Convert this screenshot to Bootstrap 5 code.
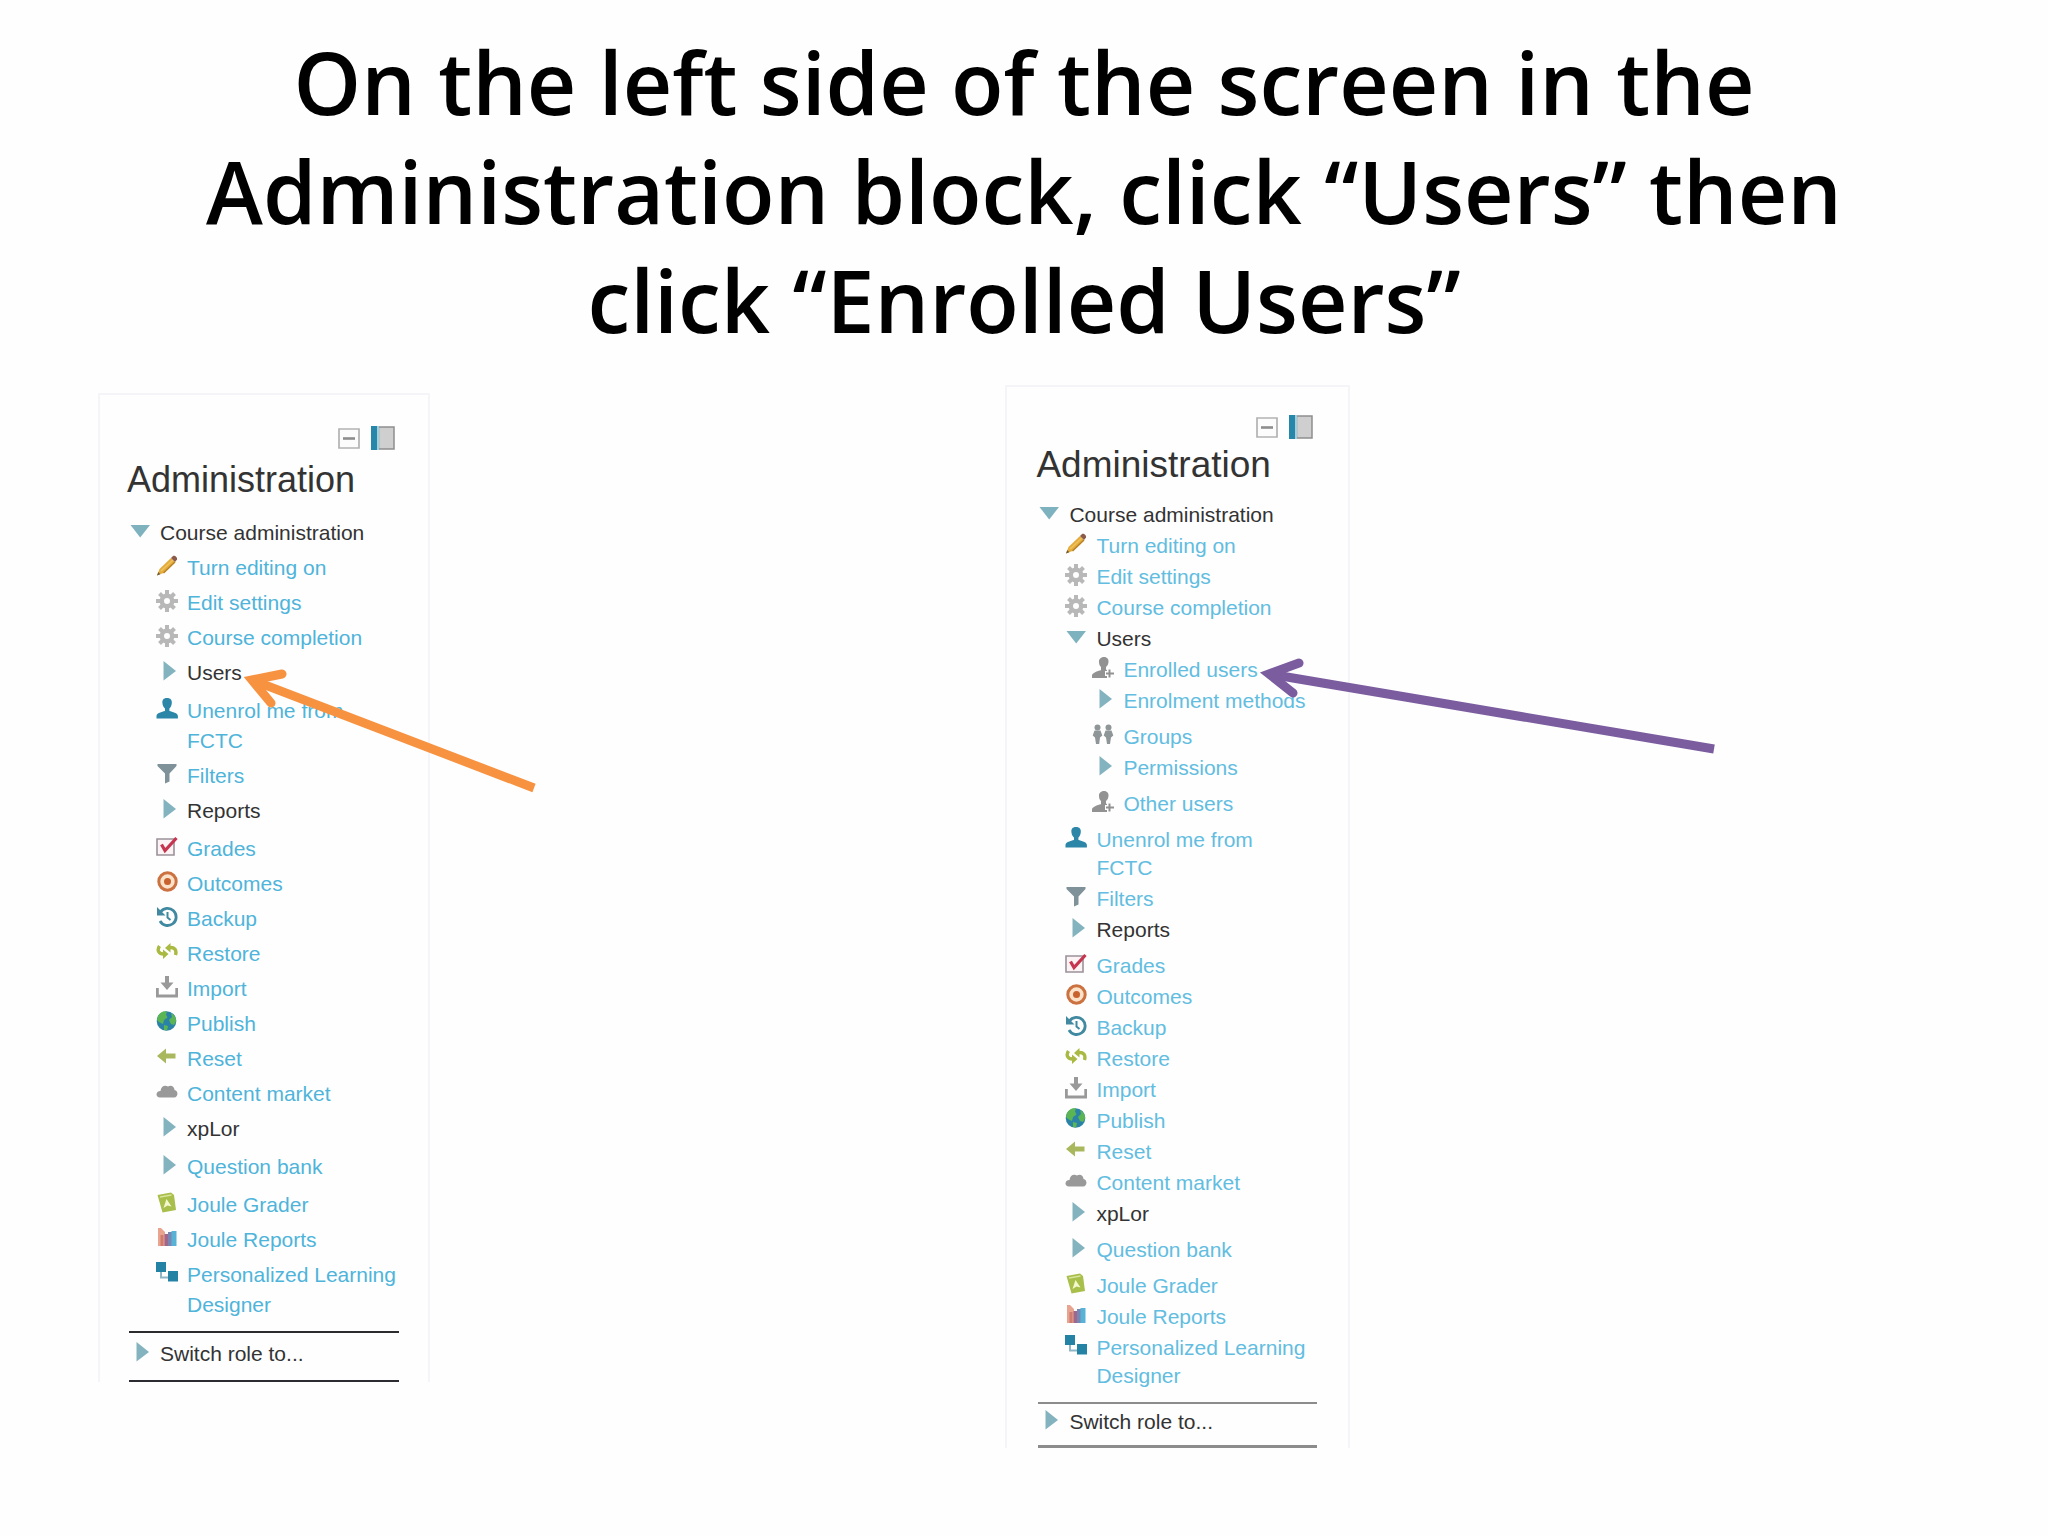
<!DOCTYPE html>
<html lang="en">
<head>
<meta charset="utf-8">
<meta name="viewport" content="width=device-width, initial-scale=1">
<title>Enrolled Users</title>
<link href="https://cdn.jsdelivr.net/npm/bootstrap@5.3.0/dist/css/bootstrap.min.css" rel="stylesheet">
<style>
  body { background: #fefefe; color: #333; font-family: "Liberation Sans", Arial, sans-serif; }
  .slide-title { font-family: "Open Sans", "Noto Sans", sans-serif; font-weight: 600; font-size: 86px; line-height: 109px; color: #000; padding-top: 27px; }
  .panels { padding-left: 98px; padding-top: 31px; gap: calc(28vw + 2px); }
  .block { --line: 30px; --gap: 5px; --extra: 3px; --link: #4fb4da; --ico-top: 2px; width: 332px; margin-top: 8px; padding: 31px 29px 0; border: solid #f5f5f9; border-width: 2px 2px 0; font-size: 21px; line-height: var(--line); }
  .block-b { --line: 28px; --gap: 3px; --extra: 5px; --link: #62bde0; --ico-top: 1px; width: 345px; margin-top: 0; padding: 28px 31px 0; }
  .tools { gap: 10px; height: 24px; margin-bottom: 10px; padding-right: 4px; }
  .block-b .tools { margin-bottom: 6px; }
  .tools svg { width: 24px; height: 24px; display: block; }
  .block h2 { font-size: 36px; line-height: 40px; margin: 0 0 18px -2px; color: #333; font-weight: 400; }
  .block-b h2 { font-size: 37px; margin-bottom: 16px; }
  .node { display: flex; gap: 9px; width: 100%; padding: 0; border: 0; background: none; color: #333; text-align: left; text-decoration: none; margin-bottom: var(--gap); }
  a.node { color: var(--link); }
  .block-b a.node { padding-right: 8px; }
  .node svg { flex: none; width: 22px; height: 22px; margin-top: var(--ico-top); }
  .tree ul { padding-left: 27px; }
  .node.extra { margin-bottom: calc(var(--gap) + var(--extra)); }
  .role { border: solid #2c2c30; border-width: 2px 0; margin-top: 11px; padding: 6px 0 11px; }
  .role .node { margin-bottom: 0; }
  .block-b .role { border-color: #8c8c8c #b0b0b0; border-bottom-width: 3px; margin-top: 12px; padding: 4px 0 9px; }
  .pointer { left: 0; top: 0; overflow: visible; pointer-events: none; }
  .pointer path { fill: none; stroke-width: 9; }
</style>
<script src="https://cdn.jsdelivr.net/npm/bootstrap@5.3.0/dist/js/bootstrap.bundle.min.js"></script>
</head>
<body>
<svg class="d-none" aria-hidden="true">
  <symbol id="down" viewBox="0 0 22 22"><path d="M1.500 5h19.500L11.200 17.500z" fill="#7fb2bf"/></symbol>
  <symbol id="right" viewBox="0 0 22 22"><path d="M7.500 1L20 11 7.500 20.500z" fill="#84b3c0"/></symbol>
  <symbol id="pencil" viewBox="0 0 22 22"><path d="M1 20.500l2.500-6.500L15 3l4 4L7.500 18z" fill="#e3ac3d"/><path d="M5 16L17 5" stroke="#f0c45c" stroke-width="1.500"/><path d="M7.500 18L19 7" stroke="#b98125" stroke-width="1.500"/><path d="M15 3l2-2c2-.8 4.500 1.500 4 3.500L19 7z" fill="#8b5a4a"/><path d="M1 20.500l1.300-3.400 2 2.200z" fill="#6b5a3c"/></symbol>
  <symbol id="gear" viewBox="0 0 22 22"><g stroke="#b8b8b8" stroke-width="4"><path d="M11 0v6M11 16v6M0 11h6M16 11h6M3.500 3.500L7 7M15 15l3.500 3.500M18.500 3.500L15 7M7 15l-3.500 3.500"/></g><circle cx="11" cy="11" r="5.200" fill="none" stroke="#b8b8b8" stroke-width="4.400"/></symbol>
  <symbol id="person" viewBox="0 0 22 22"><path d="M11 0c3.800 0 5 2.300 4.800 5-.2 2.600-1 4.300-2.400 5.400v2.600c3 .8 8.500 2 8.500 5v2.500H.5V18c0-3 5.500-4.200 8.500-5v-2.600C7.600 9.300 6.600 7.600 6.400 5 6.200 2.300 7.200 0 11 0z" fill="#2c86a8"/></symbol>
  <symbol id="adduser" viewBox="0 0 22 22"><path d="M12 0c3.300 0 4.800 2.400 4.500 5-.2 2.300-1.100 3.900-2.500 5v2.500l2 1.500v7H0v-2.500c0-2.600 5.500-4.500 9-5.300V10C7.700 8.900 7 7.300 7 5c-.2-2.600 1.700-5 5-5z" fill="#929292"/><path d="M17.500 11v10M13 16.500h9" stroke="#fff" stroke-width="5"/><path d="M17.500 12.500v8M14 16.500h8" stroke="#929292" stroke-width="2"/></symbol>
  <symbol id="group" viewBox="0 0 22 22"><g fill="#8f9698"><circle cx="5.500" cy="3.500" r="3"/><circle cx="16.500" cy="3.500" r="3"/><path d="M2.500 6.500h6l1.800 5-2.300 2-.8 6.500H4L3 13.500l-2.300-2zM13.500 6.500h6l1.800 5-2.300 2-1 6.500h-3l-1-6.500-2.300-2z"/></g></symbol>
  <symbol id="funnel" viewBox="0 0 22 22"><path d="M1.500 1h19v2l-7 7.500v8L9 20.500v-10L1.500 3z" fill="#7f9299"/></symbol>
  <symbol id="grades" viewBox="0 0 22 22"><path d="M1 3h17v16H1z" fill="#fbf3f4" stroke="#9a9299" stroke-width="1.600"/><path d="M5.500 8.500l3.500 6L20.500 2" fill="none" stroke="#c63550" stroke-width="3.200"/></symbol>
  <symbol id="target" viewBox="0 0 22 22"><circle cx="11.500" cy="10.500" r="8.700" fill="#fbe2c8" stroke="#cc7140" stroke-width="3"/><circle cx="11.500" cy="10.500" r="3.500" fill="#c8622e"/></symbol>
  <symbol id="backup" viewBox="0 0 22 22"><path d="M4.500 6A8.600 8.600 0 1 1 4 15" fill="none" stroke="#4189a0" stroke-width="2.800"/><path d="M1 1v8.500h8.500z" fill="#4189a0"/><path d="M11.500 6v5.500l3 2.500" fill="none" stroke="#4189a0" stroke-width="2"/></symbol>
  <symbol id="restore" viewBox="0 0 22 22"><g fill="none" stroke="#a9b942" stroke-width="3.400"><path d="M3.500 5c-3 4.500-.5 8.500 5 8"/><path d="M19.500 14c1.500-5-1-8-6-7.500"/></g><path d="M7 8.500v9.500l5.500-5zM14.500 2v9.500L9 7z" fill="#a9b942"/></symbol>
  <symbol id="import" viewBox="0 0 22 22"><path d="M1.300 12v8h19.500v-8" fill="none" stroke="#999" stroke-width="3"/><path d="M9 0h4v6.500h4.500L11 14 4.500 6.500H9z" fill="#999"/></symbol>
  <symbol id="globe" viewBox="0 0 22 22"><circle cx="10.500" cy="10" r="9.800" fill="#2a83a6"/><path d="M2 5C4 1 8-.5 11 .5l-1 3 1.500 3L8 9l-1 4-4-2-2-2zM15 2c3 1.500 5 4.500 5.200 8L18 14l-3-1-2-4 3-3zM8 14l4 1-1 4.500-3-.5z" fill="#5cb553"/></symbol>
  <symbol id="back" viewBox="0 0 22 22"><path d="M1 10L10 2.500V7.500h9.500v5H10v5z" fill="#a9b85c"/></symbol>
  <symbol id="cloud" viewBox="0 0 22 22"><path d="M4 16.500c-5 0-4.500-6.500.5-6.500C5 5 9 3.500 12 5.500c3-2 6.500 0 6.500 3.500 4 .5 4 7.500-.5 7.500z" fill="#999"/></symbol>
  <symbol id="grader" viewBox="0 0 22 22"><path d="M1.500 3L15 .5 18 3l2 15-13.500 2.500z" fill="#a9bf4c"/><path d="M4 5l11.500-2" stroke="#d9e49a" stroke-width="1.500"/><path d="M7.500 16L10.500 7l5 7.500-4-1z" fill="#f4f8cf"/></symbol>
  <symbol id="chart" viewBox="0 0 22 22"><path d="M2 1h3l4 4v14H2z" fill="#e8a48f"/><path d="M8.500 7h5v12h-5z" fill="#a0678c"/><path d="M12 5h4v14h-4z" fill="#7886b4"/><path d="M15.500 4h5v15h-5z" fill="#58b2d6"/><path d="M4.500 8h3v11h-3z" fill="#cf7b6f"/></symbol>
  <symbol id="nodes" viewBox="0 0 22 22"><path d="M0 0h10v10H0zM12 9h10v10.500H12z" fill="#2483a5"/><path d="M5 10v5.500h7" fill="none" stroke="#8fb6c5" stroke-width="2"/></symbol>
  <symbol id="collapse" viewBox="0 0 24 24"><path d="M2 3h20v19H2z" fill="#fcfcfc" stroke="#b2b2b2" stroke-width="1.700"/><path d="M6 12.500h12" stroke="#8d8d8d" stroke-width="2.600"/></symbol>
  <symbol id="dock" viewBox="0 0 24 24"><path d="M7.500 1H23v22H7.500z" fill="#cfcfcf" stroke="#8f8f8f" stroke-width="1.500"/><path d="M0 0h6v24H0z" fill="#2687aa"/><path d="M7 0v24" stroke="#9fd0e0" stroke-width="2"/></symbol>
</svg>

<header>
  <h1 class="slide-title text-center m-0">On the left side of the screen in the<br>Administration block, click “Users” then<br>click “Enrolled Users”</h1>
</header>

<main class="panels d-flex align-items-start">
  <section class="block position-relative flex-shrink-0">
    <div class="tools d-flex justify-content-end">
      <button class="btn p-0 border-0" aria-label="Collapse block"><svg><use href="#collapse"/></svg></button>
      <button class="btn p-0 border-0" aria-label="Dock block"><svg><use href="#dock"/></svg></button>
    </div>
    <h2>Administration</h2>
    <div class="tree">
      <button class="node"><svg><use href="#down"/></svg>Course administration</button>
      <ul class="list-unstyled m-0">
        <li><a class="node" href="#"><svg><use href="#pencil"/></svg>Turn editing on</a></li>
        <li><a class="node" href="#"><svg><use href="#gear"/></svg>Edit settings</a></li>
        <li><a class="node" href="#"><svg><use href="#gear"/></svg>Course completion</a></li>
        <li><button class="node extra"><svg><use href="#right"/></svg>Users</button></li>
        <li><a class="node" href="#"><svg><use href="#person"/></svg>Unenrol me from FCTC</a></li>
        <li><a class="node" href="#"><svg><use href="#funnel"/></svg>Filters</a></li>
        <li><button class="node extra"><svg><use href="#right"/></svg>Reports</button></li>
        <li><a class="node" href="#"><svg><use href="#grades"/></svg>Grades</a></li>
        <li><a class="node" href="#"><svg><use href="#target"/></svg>Outcomes</a></li>
        <li><a class="node" href="#"><svg><use href="#backup"/></svg>Backup</a></li>
        <li><a class="node" href="#"><svg><use href="#restore"/></svg>Restore</a></li>
        <li><a class="node" href="#"><svg><use href="#import"/></svg>Import</a></li>
        <li><a class="node" href="#"><svg><use href="#globe"/></svg>Publish</a></li>
        <li><a class="node" href="#"><svg><use href="#back"/></svg>Reset</a></li>
        <li><a class="node" href="#"><svg><use href="#cloud"/></svg>Content market</a></li>
        <li><button class="node extra"><svg><use href="#right"/></svg>xpLor</button></li>
        <li><a class="node extra" href="#"><svg><use href="#right"/></svg>Question bank</a></li>
        <li><a class="node" href="#"><svg><use href="#grader"/></svg>Joule Grader</a></li>
        <li><a class="node" href="#"><svg><use href="#chart"/></svg>Joule Reports</a></li>
        <li><a class="node" href="#"><svg><use href="#nodes"/></svg>Personalized Learning Designer</a></li>
      </ul>
    </div>
    <div class="role"><button class="node"><svg><use href="#right"/></svg>Switch role to...</button></div>
    <svg class="pointer position-absolute" width="440" height="400" aria-hidden="true">
      <path d="M152 285L434 393" stroke="#f79240"/>
      <path d="M182 279L152 285 171 308" stroke="#f79240" stroke-linecap="round" stroke-miterlimit="8"/>
    </svg>
  </section>

  <section class="block block-b position-relative flex-shrink-0">
    <div class="tools d-flex justify-content-end">
      <button class="btn p-0 border-0" aria-label="Collapse block"><svg><use href="#collapse"/></svg></button>
      <button class="btn p-0 border-0" aria-label="Dock block"><svg><use href="#dock"/></svg></button>
    </div>
    <h2>Administration</h2>
    <div class="tree">
      <button class="node"><svg><use href="#down"/></svg>Course administration</button>
      <ul class="list-unstyled m-0">
        <li><a class="node" href="#"><svg><use href="#pencil"/></svg>Turn editing on</a></li>
        <li><a class="node" href="#"><svg><use href="#gear"/></svg>Edit settings</a></li>
        <li><a class="node" href="#"><svg><use href="#gear"/></svg>Course completion</a></li>
        <li><button class="node"><svg><use href="#down"/></svg>Users</button>
          <ul class="list-unstyled m-0">
            <li><a class="node" href="#"><svg><use href="#adduser"/></svg>Enrolled users</a></li>
            <li><a class="node extra pe-0" href="#"><svg><use href="#right"/></svg>Enrolment methods</a></li>
            <li><a class="node" href="#"><svg><use href="#group"/></svg>Groups</a></li>
            <li><a class="node extra" href="#"><svg><use href="#right"/></svg>Permissions</a></li>
            <li><a class="node extra" href="#"><svg><use href="#adduser"/></svg>Other users</a></li>
          </ul>
        </li>
        <li><a class="node" href="#"><svg><use href="#person"/></svg>Unenrol me from FCTC</a></li>
        <li><a class="node" href="#"><svg><use href="#funnel"/></svg>Filters</a></li>
        <li><button class="node extra"><svg><use href="#right"/></svg>Reports</button></li>
        <li><a class="node" href="#"><svg><use href="#grades"/></svg>Grades</a></li>
        <li><a class="node" href="#"><svg><use href="#target"/></svg>Outcomes</a></li>
        <li><a class="node" href="#"><svg><use href="#backup"/></svg>Backup</a></li>
        <li><a class="node" href="#"><svg><use href="#restore"/></svg>Restore</a></li>
        <li><a class="node" href="#"><svg><use href="#import"/></svg>Import</a></li>
        <li><a class="node" href="#"><svg><use href="#globe"/></svg>Publish</a></li>
        <li><a class="node" href="#"><svg><use href="#back"/></svg>Reset</a></li>
        <li><a class="node" href="#"><svg><use href="#cloud"/></svg>Content market</a></li>
        <li><button class="node extra"><svg><use href="#right"/></svg>xpLor</button></li>
        <li><a class="node extra" href="#"><svg><use href="#right"/></svg>Question bank</a></li>
        <li><a class="node" href="#"><svg><use href="#grader"/></svg>Joule Grader</a></li>
        <li><a class="node" href="#"><svg><use href="#chart"/></svg>Joule Reports</a></li>
        <li><a class="node" href="#"><svg><use href="#nodes"/></svg>Personalized Learning Designer</a></li>
      </ul>
    </div>
    <div class="role"><button class="node"><svg><use href="#right"/></svg>Switch role to...</button></div>
    <svg class="pointer position-absolute" width="710" height="370" aria-hidden="true">
      <path d="M262 287L707 362" stroke="#7a5c9f"/>
      <path d="M292 276L262 287 286 306" stroke="#7a5c9f" stroke-linecap="round" stroke-miterlimit="8"/>
    </svg>
  </section>
</main>
</body>
</html>
